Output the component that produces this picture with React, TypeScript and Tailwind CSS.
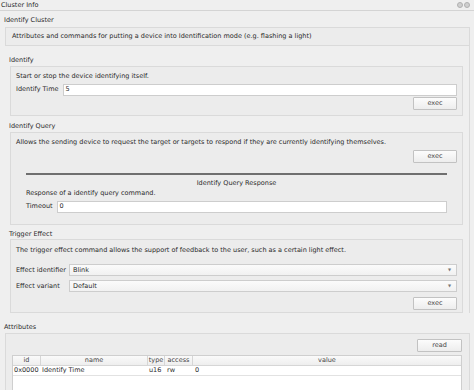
import React from 'react';

const Btn: React.FC<{ label: string; className?: string }> = ({ label, className = '' }) => (
  <div
    className={`h-[13px] flex items-center justify-center border border-[#c2c2c2] rounded-[1px] bg-gradient-to-b from-[#fcfcfc] to-[#ededed] text-[#444] ${className}`}
  >
    {label}
  </div>
);

const Input: React.FC<{ value: string; className?: string }> = ({ value, className = '' }) => (
  <div className={`h-[12px] flex items-center bg-white border border-[#cdcdcd] pl-[2px] ${className}`}>{value}</div>
);

const Combo: React.FC<{ value: string }> = ({ value }) => (
  <div className="h-[12px] flex-1 flex items-center justify-between bg-gradient-to-b from-[#fbfbfb] to-[#f1f1f1] border border-[#cdcdcd] pl-[3px] pr-[5px]">
    <span>{value}</span>
    <span className="text-[4px] text-[#777]">▼</span>
  </div>
);

const Frame: React.FC<{ className?: string; children: React.ReactNode }> = ({ className = '', children }) => (
  <div className={`border border-[#dadada] bg-[#ececec] ${className}`}>{children}</div>
);

export default function App() {
  return (
    <div
      className="w-[474px] h-[390px] overflow-hidden bg-[#efefef] text-[#2a2a2a] text-[6.5px] leading-none"
      style={{ fontFamily: '"DejaVu Sans", sans-serif' }}
    >
      {/* title bar */}
      <div className="h-[11px] flex items-center justify-between border-b border-[#d4d4d4] pl-[1px] pr-[4px]">
        <span>Cluster Info</span>
        <div className="flex gap-[1px]">
          <div className="w-[6px] h-[6px] rounded-full bg-[#cfcfcf] border border-[#b0b0b0]" />
          <div className="w-[6px] h-[6px] rounded-full bg-[#cfcfcf] border border-[#b0b0b0]" />
        </div>
      </div>

      <div className="h-[16px] flex items-center pl-[4px] pt-[2px]">Identify Cluster</div>
      <Frame className="ml-[5px] mr-[4px] h-[19px] flex items-center pl-[6px]">
        Attributes and commands for putting a device into Identification mode (e.g. flashing a light)
      </Frame>

      <div className="ml-[5px] mr-[4px] h-[267px] border-r border-[#dadada]">
        <div className="h-[20px] flex items-center pl-[4px] pt-[8px]">Identify</div>
        <Frame className="ml-[5px] mr-[6px] h-[50px] flex flex-col px-[5px] pt-[4px]">
          <div className="h-[10px] flex items-center">Start or stop the device identifying itself.</div>
          <div className="h-[13px] flex items-center gap-[4px] mt-[2px]">
            <span>Identify Time</span>
            <Input value="5" className="flex-1" />
          </div>
          <div className="flex justify-end mt-[1px]">
            <Btn label="exec" className="w-[44px]" />
          </div>
        </Frame>

        <div className="h-[16px] flex items-center pl-[4px] pt-[4px]">Identify Query</div>
        <Frame className="ml-[5px] mr-[6px] h-[93px] flex flex-col px-[5px] pt-[4px]">
          <div className="h-[10px] flex items-center">
            Allows the sending device to request the target or targets to respond if they are currently identifying themselves.
          </div>
          <div className="flex justify-end mt-[3px]">
            <Btn label="exec" className="w-[44px]" />
          </div>
          <div className="mx-[10px] mt-[10px] h-[2px] bg-[#6f6f6f]" />
          <div className="h-[14px] flex items-center justify-center pt-[2px]">Identify Query Response</div>
          <div className="h-[8px] flex items-center pl-[10px]">Response of a identify query command.</div>
          <div className="h-[13px] flex items-center gap-[4px] mx-[10px] mt-[3px]">
            <span>Timeout</span>
            <Input value="0" className="flex-1" />
          </div>
        </Frame>

        <div className="h-[14px] flex items-center pl-[4px] pt-[4px]">Trigger Effect</div>
        <Frame className="ml-[5px] mr-[6px] h-[74px] flex flex-col px-[5px] pt-[5px]">
          <div className="h-[10px] flex items-center">
            The trigger effect command allows the support of feedback to the user, such as a certain light effect.
          </div>
          <div className="h-[12px] flex items-center mt-[9px]">
            <span className="w-[53px]">Effect identifier</span>
            <Combo value="Blink" />
          </div>
          <div className="h-[12px] flex items-center mt-[4px]">
            <span className="w-[53px]">Effect variant</span>
            <Combo value="Default" />
          </div>
          <div className="flex justify-end mt-[5px]">
            <Btn label="exec" className="w-[44px]" />
          </div>
        </Frame>
      </div>

      <div className="h-[20px] flex items-center pl-[4px] pt-[8px]">Attributes</div>
      <Frame className="ml-[5px] mr-[4px] h-[80px] flex flex-col pl-[6px] pr-[7px] pt-[5px]">
        <div className="flex justify-end">
          <Btn label="read" className="w-[45px]" />
        </div>
        <div className="mt-[3px] bg-white border border-[#cfcfcf] h-[60px]">
          <div className="flex h-[10px] bg-gradient-to-b from-[#fafafa] to-[#eeeeee] border-b border-[#d6d6d6] text-[#444]">
            <div className="w-[28px] flex items-center justify-center border-r border-[#d6d6d6]">id</div>
            <div className="w-[107px] flex items-center justify-center border-r border-[#d6d6d6]">name</div>
            <div className="w-[17px] flex items-center justify-center border-r border-[#d6d6d6]">type</div>
            <div className="w-[28px] flex items-center justify-center border-r border-[#d6d6d6]">access</div>
            <div className="flex-1 flex items-center justify-center">value</div>
          </div>
          <div className="flex h-[10px] border-b border-[#e2e2e2]">
            <div className="w-[28px] flex items-center pl-[1px]">0x0000</div>
            <div className="w-[107px] flex items-center pl-[1px]">Identify Time</div>
            <div className="w-[17px] flex items-center pl-[1px]">u16</div>
            <div className="w-[28px] flex items-center pl-[2px]">rw</div>
            <div className="flex-1 flex items-center pl-[2px]">0</div>
          </div>
        </div>
      </Frame>
    </div>
  );
}
